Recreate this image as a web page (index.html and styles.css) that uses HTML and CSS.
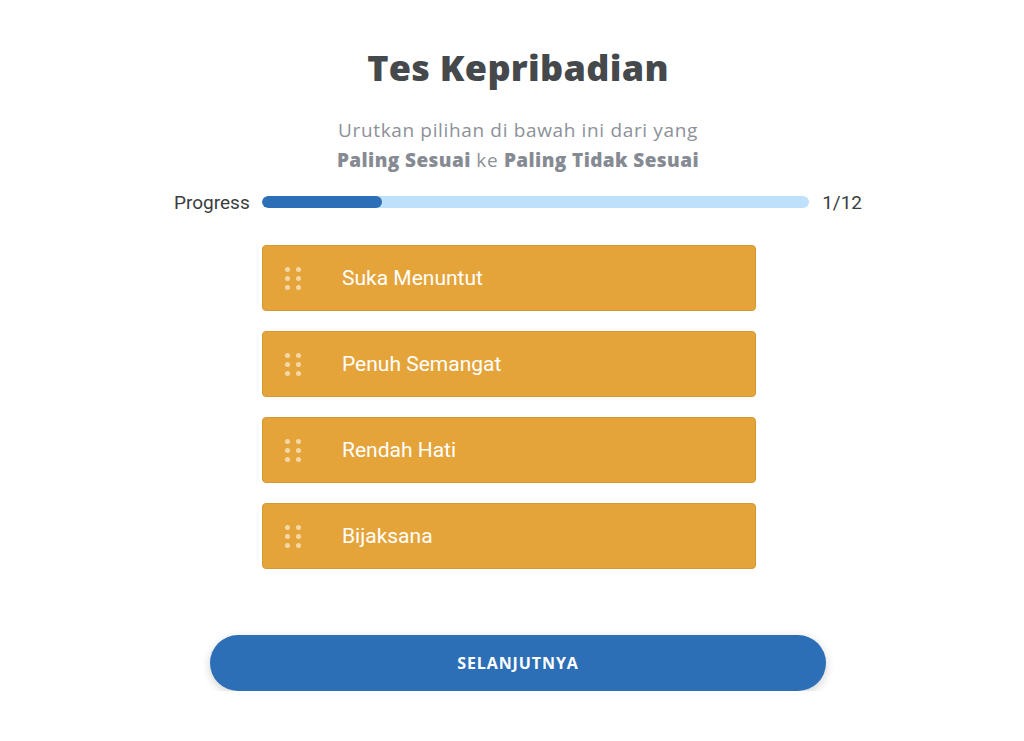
FILE: index.html
```html
<!DOCTYPE html>
<html lang="id">
<head>
<meta charset="utf-8">
<title>Tes Kepribadian</title>
<link rel="stylesheet" href="styles.css">
</head>
<body>
<main class="page">
  <h1 class="title">Tes Kepribadian</h1>
  <p class="subtitle">Urutkan pilihan di bawah ini dari yang<br><b>Paling Sesuai</b> ke <b>Paling Tidak Sesuai</b></p>
  <div class="progress">
    <span class="progress-label">Progress</span>
    <div class="track"><div class="fill" style="width:22%"></div></div>
    <span class="progress-count">1/12</span>
  </div>
  <ul class="options">
    <li class="option"><span class="handle"><i></i><i></i><i></i><i></i><i></i><i></i></span><span class="option-text">Suka Menuntut</span></li>
    <li class="option"><span class="handle"><i></i><i></i><i></i><i></i><i></i><i></i></span><span class="option-text">Penuh Semangat</span></li>
    <li class="option"><span class="handle"><i></i><i></i><i></i><i></i><i></i><i></i></span><span class="option-text">Rendah Hati</span></li>
    <li class="option"><span class="handle"><i></i><i></i><i></i><i></i><i></i><i></i></span><span class="option-text">Bijaksana</span></li>
  </ul>
  <button class="next">SELANJUTNYA</button>
</main>
</body>
</html>
```
FILE: styles.css
```css
html, body {
  margin: 0;
  padding: 0;
  background: #ffffff;
}
.page {
  width: 688px;
  margin-left: 174px;
  display: flex;
  flex-direction: column;
  align-items: center;
  padding-top: 44px;
  font-family: "Open Sans", "Liberation Sans", sans-serif;
}
.title {
  margin: 0;
  font-family: "Open Sans", sans-serif;
  font-weight: 800;
  font-size: 36px;
  line-height: 48px;
  color: #45494c;
  letter-spacing: 0.3px;
}
.subtitle {
  margin: 23px 0 0;
  text-align: center;
  font-size: 19px;
  line-height: 30px;
  color: #8c9198;
  font-weight: 400;
  letter-spacing: 0.65px;
}
.subtitle b {
  font-weight: 800;
  color: #868b93;
  letter-spacing: 0.4px;
}
.progress {
  align-self: stretch;
  display: flex;
  align-items: center;
  margin-top: 16px;
  font-family: Roboto, sans-serif;
  font-size: 19px;
  color: #3a3d40;
  height: 22px;
}
.progress-label { width: 88px; }
.track {
  flex: 1;
  height: 12px;
  border-radius: 6px;
  background: #bfe0fb;
  overflow: hidden;
}
.fill {
  height: 100%;
  background: #2c6fb6;
  border-radius: 6px;
}
.progress-count {
  margin-left: 13px;
}
.options {
  list-style: none;
  margin: 32px 0 0;
  padding: 0;
  align-self: flex-start;
  margin-left: 88px;
  display: flex;
  flex-direction: column;
  gap: 20px;
}
.option {
  width: 494px;
  height: 66px;
  box-sizing: border-box;
  background: #e5a43a;
  border: 1px solid #d39830;
  border-radius: 4px;
  display: flex;
  align-items: center;
}
.handle {
  display: grid;
  grid-template-columns: 5px 5px;
  column-gap: 6px;
  row-gap: 4px;
  margin-left: 22px;
  width: 16px;
}
.handle i {
  display: block;
  width: 5px;
  height: 5px;
  border-radius: 50%;
  background: #f4d7a6;
}
.option-text {
  margin-left: 41px;
  font-family: Roboto, sans-serif;
  font-weight: 400;
  font-size: 21px;
  color: #ffffff;
}
.next {
  margin-top: 66px;
  width: 616px;
  height: 56px;
  border: none;
  border-radius: 28px;
  background: #2c6fb6;
  color: #ffffff;
  font-family: "Open Sans", sans-serif;
  font-weight: 700;
  font-size: 16px;
  letter-spacing: 0.9px;
  box-shadow: 0 3px 10px rgba(0,0,0,0.18);
  cursor: pointer;
}
```
